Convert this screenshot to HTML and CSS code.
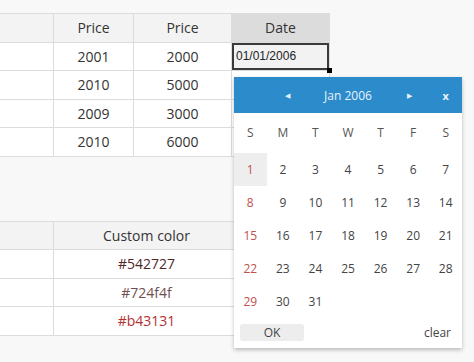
FILE: index.html
```html
<!DOCTYPE html>
<html lang="en">
<head>
    <meta charset="UTF-8">
    <title>Grid with date picker</title>
    <link rel="stylesheet" href="styles.css">
</head>
<body>
    <div class="sheet">
        <table class="grid">
            <tr>
                <th class="first"></th>
                <th class="w80">Price</th>
                <th class="w98">Price</th>
                <th class="w98 active">Date</th>
            </tr>
            <tr><td></td><td>2001</td><td>2000</td><td class="editing">01/01/2006<span class="handle"></span></td></tr>
            <tr><td></td><td>2010</td><td>5000</td><td></td></tr>
            <tr><td></td><td>2009</td><td>3000</td><td></td></tr>
            <tr><td></td><td>2010</td><td>6000</td><td></td></tr>
        </table>

        <table class="grid lower">
            <tr>
                <th class="first"></th>
                <th class="w186">Custom color</th>
            </tr>
            <tr><td></td><td style="color:#542727">#542727</td></tr>
            <tr><td></td><td style="color:#724f4f">#724f4f</td></tr>
            <tr><td></td><td style="color:#b43131">#b43131</td></tr>
        </table>
    </div>

    <div class="picker">
        <div class="picker-head">
            <span></span>
            <span class="nav prev">&#9664;</span>
            <span class="title">Jan 2006</span>
            <span class="nav next">&#9654;</span>
            <span class="close">x</span>
        </div>
        <div class="days">
            <span class="dow">S</span><span class="dow">M</span><span class="dow">T</span><span class="dow">W</span><span class="dow">T</span><span class="dow">F</span><span class="dow">S</span>
            <span class="sun today">1</span><span>2</span><span>3</span><span>4</span><span>5</span><span>6</span><span>7</span>
            <span class="sun">8</span><span>9</span><span>10</span><span>11</span><span>12</span><span>13</span><span>14</span>
            <span class="sun">15</span><span>16</span><span>17</span><span>18</span><span>19</span><span>20</span><span>21</span>
            <span class="sun">22</span><span>23</span><span>24</span><span>25</span><span>26</span><span>27</span><span>28</span>
            <span class="sun">29</span><span>30</span><span>31</span>
        </div>
        <div class="picker-foot">
            <button class="ok">OK</button>
            <span class="clear">clear</span>
        </div>
    </div>
</body>
</html>
```

FILE: styles.css
```css
body {
    margin: 0;
    min-height: 362px;
    background-color: #f8f8f8;
    font-family: "Open Sans", sans-serif;
    color: #333;
    position: relative;
}
.sheet {
    padding-top: 13px;
}
.grid {
    border-collapse: collapse;
    margin-left: -20px;
    background-color: #fff;
    font-size: 14px;
}
.grid th,
.grid td {
    border: 1px solid #dcdcdc;
    height: 27.5px;
    padding: 0;
    text-align: center;
    font-weight: normal;
}
.grid th {
    background-color: #f3f3f3;
}
.grid th.active {
    background-color: #dcdcdc;
}
.first { width: 72px; }
.w80 { width: 79px; }
.w98 { width: 97px; }
.w186 { width: 185px; }
.lower {
    margin-top: 64px;
}
.grid td.editing {
    position: relative;
    text-align: left;
    padding-left: 4px;
    font-family: "Liberation Sans", Arial, sans-serif;
    font-size: 12px;
    color: #222;
    background-color: #f2f2f2;
    box-shadow: inset 0 0 0 2px #3a3a3a;
}
.handle {
    position: absolute;
    right: -3px;
    bottom: -3px;
    width: 5px;
    height: 5px;
    background-color: #000;
}
.picker {
    position: absolute;
    left: 234px;
    top: 77px;
    width: 228px;
    background-color: #fff;
    box-shadow: 0 2px 4px rgba(0, 0, 0, 0.25);
    font-size: 12px;
}
.picker-head {
    display: grid;
    grid-template-columns: repeat(7, 1fr);
    height: 36px;
    align-items: center;
    background-color: #2b8bcb;
    color: #e8f2fa;
    text-align: center;
}
.picker-head .title {
    grid-column: span 3;
}
.nav {
    font-size: 7px;
}
.prev { padding-left: 10px; }
.next { padding-right: 8px; }
.close {
    font-weight: bold;
    font-size: 11px;
}
.days {
    display: grid;
    grid-template-columns: repeat(7, 1fr);
    grid-template-rows: 40px;
    grid-auto-rows: 33px;
    align-items: center;
    text-align: center;
    color: #444;
}
.days span {
    height: 33px;
    line-height: 33px;
}
.days .dow {
    color: #555;
    height: 40px;
    line-height: 40px;
}
.days .sun {
    color: #c0504d;
}
.days .today {
    background-color: #eeeeee;
}
.picker-foot {
    display: flex;
    justify-content: space-between;
    align-items: center;
    padding: 6px 11px 7px 6px;
}
.ok {
    width: 64px;
    height: 17px;
    padding: 0;
    border: none;
    border-radius: 3px;
    background-color: #ededed;
    font-family: "Open Sans", sans-serif;
    font-size: 12px;
    color: #444;
    line-height: 17px;
}
.clear {
    color: #444;
}
```
